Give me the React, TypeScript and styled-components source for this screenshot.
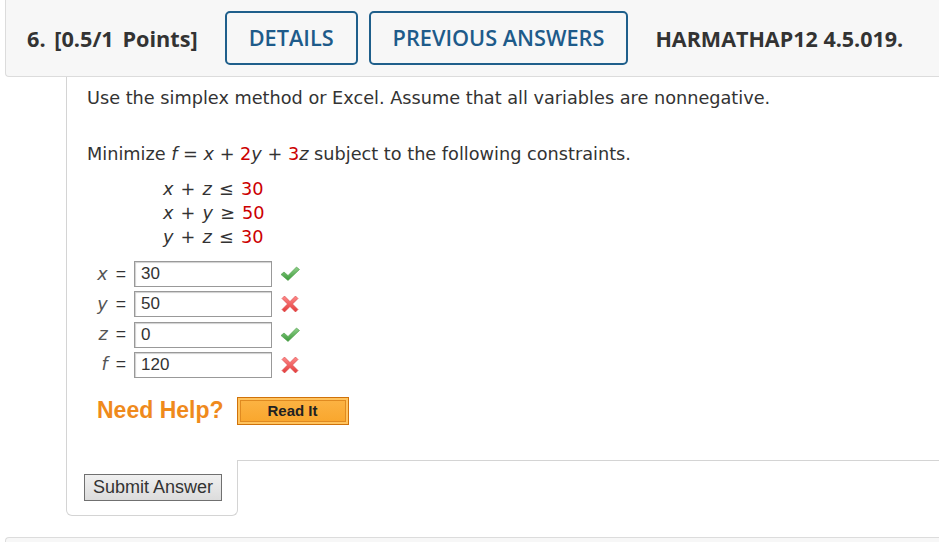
import React from 'react'
import styled, {createGlobalStyle} from 'styled-components'

const GlobalStyle = createGlobalStyle`
  html, body {
    margin: 0;
    padding: 0;
    background: #ffffff;
  }
  body {
    font-family: "Open Sans", "DejaVu Sans", sans-serif;
    color: #333333;
  }
`

const Page = styled.div`
  width: 939px;
  height: 542px;
  overflow: hidden;
  padding-left: 5px;
  box-sizing: border-box;
`

const QuestionHeader = styled.div<{next?: boolean}>`
  display: flex;
  align-items: center;
  height: ${(p) => (p.next ? '20px' : '77px')};
  margin-top: ${(p) => (p.next ? '21px' : '0')};
  background: #f7f7f7;
  border: 1px solid #dcdcdc;
  border-top: ${(p) => (p.next ? '1px solid #dcdcdc' : 'none')};
  border-right: none;
  border-radius: ${(p) => (p.next ? '4px 0 0 0' : '0 0 0 4px')};
  box-sizing: border-box;
  padding-left: 21px;
`

const Points = styled.div`
  font-size: 21.7px;
  font-weight: 700;
  color: #333333;
  margin-right: 27px;
  word-spacing: 3px;
`

const OutlineButton = styled.button`
  height: 54px;
  margin-top: -1px;
  margin-right: 11px;
  padding: 0 22px;
  background: transparent;
  border: 2px solid #1f5f8b;
  border-radius: 5px;
  color: #1e5b8a;
  font-family: "Open Sans", sans-serif;
  font-size: 21.7px;
  font-weight: 600;
`

const Code = styled.div`
  font-size: 21.5px;
  font-weight: 700;
  color: #333333;
  margin-left: 16px;
`

const Content = styled.div`
  margin-left: 61px;
  border-left: 1px solid #d4d4d4;
  padding: 10px 0 0 20px;
  font-family: "DejaVu Sans", Verdana, sans-serif;
  font-size: 17.7px;
  color: #333333;
`

const Para = styled.p<{gap?: number}>`
  margin: 0 0 ${(p) => p.gap ?? 0}px 0;
  line-height: 22px;
`

const Var = styled.i`
  font-style: italic;
`

const Red = styled.span`
  color: #cc0000;
`

const Constraints = styled.div`
  margin: 12px 0 12px 76px;
  display: flex;
  flex-direction: column;
`

const Constraint = styled.div`
  line-height: 24px;
  word-spacing: 1.5px;
`

const Answers = styled.div`
  display: grid;
  grid-template-columns: 40px 138px 26px;
  column-gap: 8px;
  row-gap: 4.3px;
  align-items: center;
  margin-left: -1px;
`

const Label = styled.div`
  text-align: right;
  font-size: 17.6px;
  color: #555555;
  white-space: nowrap;
`

const Eq = styled.span`
  font-family: "Liberation Sans", Arial, sans-serif;
  color: #333333;
  margin-left: 8px;
`

const Field = styled.div`
  height: 26px;
  border: 1px solid #999999;
  box-shadow: inset 1px 1px 1px #d0d0d0;
  box-sizing: border-box;
  padding-left: 6px;
  display: flex;
  align-items: center;
  font-family: "Liberation Sans", Arial, sans-serif;
  font-size: 17px;
  color: #333333;
`

const Mark = styled.div`
  display: flex;
  align-items: center;
`

const Help = styled.div`
  display: flex;
  align-items: center;
  gap: 14px;
  margin: 19px 0 0 10px;
  padding-bottom: 35px;
`

const HelpText = styled.span`
  font-family: "Liberation Sans", Arial, sans-serif;
  font-size: 23px;
  font-weight: 700;
  color: #ef8a1c;
`

const ReadIt = styled.button`
  width: 112px;
  height: 28px;
  margin-left: -1px;
  background: linear-gradient(#fcb445, #f9a52b);
  border: 1px solid #d0720a;
  box-shadow: inset 0 0 0 2px #ffc35e, inset 0 0 0 3px #e08a20;
  font-family: "Liberation Sans", Arial, sans-serif;
  font-size: 15px;
  font-weight: 700;
  color: #222222;
  padding: 0;
`

const Footer = styled.div`
  display: flex;
  margin-left: 61px;
`

const SubmitTab = styled.div`
  width: 172px;
  height: 56px;
  border: 1px solid #d4d4d4;
  border-top: none;
  border-radius: 0 0 6px 6px;
  box-sizing: border-box;
  padding: 14px 0 0 17px;
`

const Filler = styled.div`
  flex: 1;
  border-top: 1px solid #d4d4d4;
  margin-left: -1px;
`

const SubmitButton = styled.button`
  height: 27px;
  padding: 0 8px;
  background: linear-gradient(#f0f0f0, #dcdcdc);
  border: 1px solid #707070;
  font-family: "Liberation Sans", Arial, sans-serif;
  font-size: 18px;
  color: #333333;
`

const Check = () => (
  <svg width="20" height="18" viewBox="0 0 20 18">
    <defs>
      <linearGradient id="g" x1="0" y1="0" x2="0" y2="1">
        <stop offset="0" stopColor="#8fd08a" />
        <stop offset="1" stopColor="#3c9a3a" />
      </linearGradient>
    </defs>
    <path d="M1 9.5 L4 7 L8 10.5 L16.5 2 L19.5 4.5 L8 15.5 Z" fill="url(#g)" stroke="#4a9a45" strokeWidth="0.6" strokeLinejoin="round" />
  </svg>
)

const Cross = () => (
  <svg width="20" height="18" viewBox="0 0 20 18">
    <defs>
      <linearGradient id="r" x1="0" y1="0" x2="0" y2="1">
        <stop offset="0" stopColor="#ff8a8a" />
        <stop offset="1" stopColor="#e23c3c" />
      </linearGradient>
    </defs>
    <path d="M2 3.5 L4.5 1 L10 6.5 L15.5 1 L18 3.5 L12.5 9 L18 14.5 L15.5 17 L10 11.5 L4.5 17 L2 14.5 L7.5 9 Z" fill="url(#r)" stroke="#d84444" strokeWidth="0.6" strokeLinejoin="round" />
  </svg>
)

const answers = [
  {name: 'x', value: '30', ok: true},
  {name: 'y', value: '50', ok: false},
  {name: 'z', value: '0', ok: true},
  {name: 'f', value: '120', ok: false},
]

const App = (): JSX.Element => (
  <Page>
    <GlobalStyle />
    <QuestionHeader>
      <Points>6. [0.5/1 Points]</Points>
      <OutlineButton>DETAILS</OutlineButton>
      <OutlineButton>PREVIOUS ANSWERS</OutlineButton>
      <Code>HARMATHAP12 4.5.019.</Code>
    </QuestionHeader>
    <Content>
      <Para gap={34}>Use the simplex method or Excel. Assume that all variables are nonnegative.</Para>
      <Para>
        Minimize <Var>f</Var> = <Var>x</Var> + <Red>2</Red><Var>y</Var> + <Red>3</Red><Var>z</Var> subject to the following constraints.
      </Para>
      <Constraints>
        <Constraint><Var>x</Var> + <Var>z</Var> ≤ <Red>30</Red></Constraint>
        <Constraint><Var>x</Var> + <Var>y</Var> ≥ <Red>50</Red></Constraint>
        <Constraint><Var>y</Var> + <Var>z</Var> ≤ <Red>30</Red></Constraint>
      </Constraints>
      <Answers>
        {answers.map((a) => (
          <React.Fragment key={a.name}>
            <Label><Var>{a.name}</Var><Eq>=</Eq></Label>
            <Field>{a.value}</Field>
            <Mark>{a.ok ? <Check /> : <Cross />}</Mark>
          </React.Fragment>
        ))}
      </Answers>
      <Help>
        <HelpText>Need Help?</HelpText>
        <ReadIt>Read It</ReadIt>
      </Help>
    </Content>
    <Footer>
      <SubmitTab>
        <SubmitButton>Submit Answer</SubmitButton>
      </SubmitTab>
      <Filler />
    </Footer>
    <QuestionHeader next />
  </Page>
)

export default App
